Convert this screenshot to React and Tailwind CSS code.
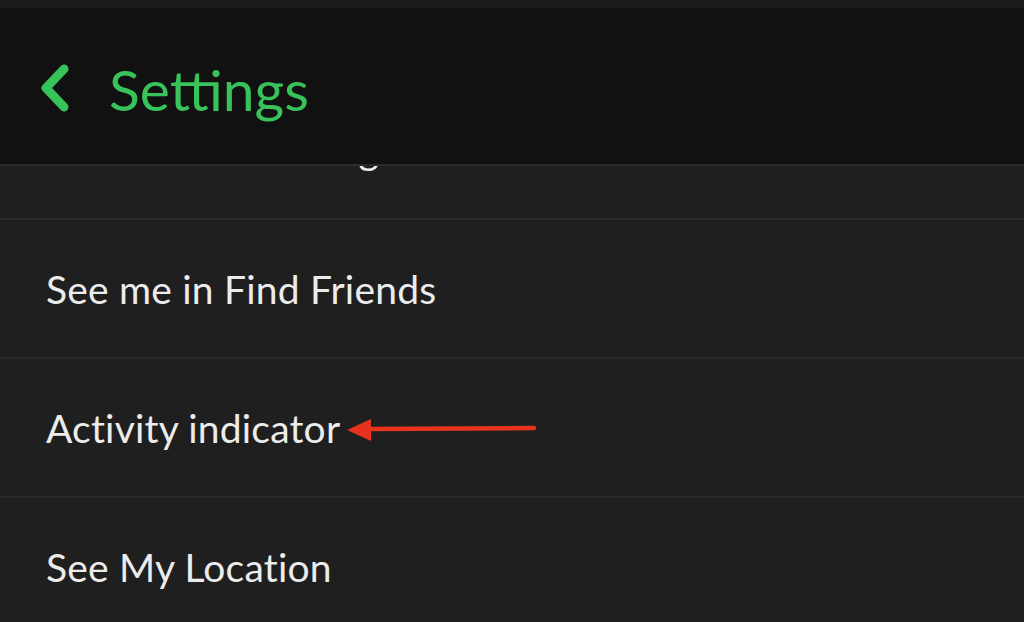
import React from 'react';

const rows = ['See me in Find Friends', 'Activity indicator', 'See My Location'];

const Row = ({ label, arrow }) => (
    <div className="h-[139px] shrink-0 flex items-center border-t-2 border-[#2b2b2b] pl-[46px]">
        <span className="text-[39px] text-[#ececec] tracking-[0.2px] mt-[2px]">{label}</span>
        {arrow && (
            <svg width="192" height="26" viewBox="0 0 192 26" className="ml-[6px] mt-[4px]">
                <line x1="20" y1="12" x2="188" y2="11" stroke="#e8321e" strokeWidth="4.5" strokeLinecap="round" />
                <polygon points="1,13 25,2 25,24" fill="#e8321e" />
            </svg>
        )}
    </div>
);

const App = () => {
    return (
        <div className="h-[622px] w-full overflow-hidden flex flex-col bg-[#1f1f1f]" style={{ fontFamily: 'Lato, "Noto Sans", sans-serif' }}>
            {/* Status strip */}
            <div className="h-[8px] shrink-0 bg-[#1b1b1b]" />

            {/* Header */}
            <div className="h-[158px] shrink-0 bg-[#111111] border-b-2 border-[#2a2a2a] flex items-center pl-[38px] z-10">
                <svg width="34" height="50" viewBox="0 0 34 50" className="mt-[4px]">
                    <polyline points="26,6 8,25 26,44" fill="none" stroke="#37c25a" strokeWidth="9" strokeLinecap="round" strokeLinejoin="round" />
                </svg>
                <h1 className="ml-[37px] text-[57px] text-[#37c25a] mt-[8px]">Settings</h1>
            </div>

            {/* List */}
            <div className="flex-1 min-h-0 flex flex-col overflow-hidden">
                <div className="h-[52px] shrink-0 overflow-hidden pl-[46px]">
                    <span className="block text-[39px] text-[#ececec] mt-[-46px]">Notification Settings</span>
                </div>
                {rows.map((r) => (
                    <Row key={r} label={r} arrow={r === 'Activity indicator'} />
                ))}
            </div>
        </div>
    );
};

export default App;
